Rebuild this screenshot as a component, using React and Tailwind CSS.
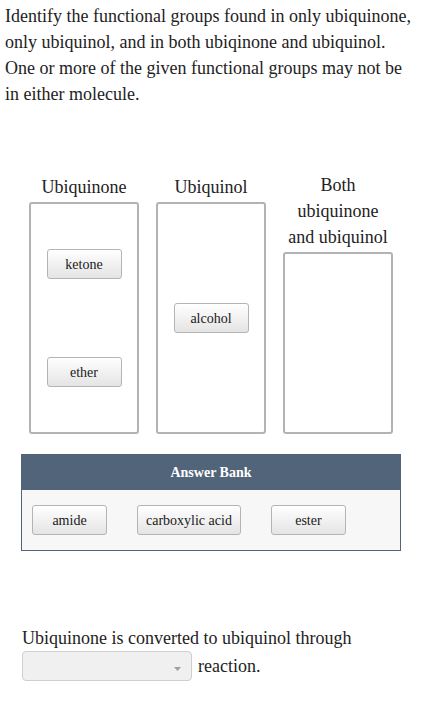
import React from "react";

const serif = { fontFamily: '"Liberation Serif", "Times New Roman", serif' };

const COLUMNS = [
  { label: ["Ubiquinone"], height: "h-[232px]", items: ["ketone", "ether"] },
  { label: ["Ubiquinol"], height: "h-[232px]", items: ["alcohol"] },
  { label: ["Both", "ubiquinone", "and ubiquinol"], height: "h-[182px]", items: [] },
];

const BANK = ["amide", "carboxylic acid", "ester"];

function Chip({ children }) {
  return (
    <div className="flex h-[30px] min-w-[75px] items-center justify-center rounded-[3px] border border-[#b4b4b4] bg-gradient-to-b from-white to-[#e4e4e4] px-[8px] text-[14px] text-[#1a1a1a]">
      {children}
    </div>
  );
}

function DropColumn({ label, height, items }) {
  return (
    <div className="flex w-[110px] flex-col items-center">
      <div className="mb-[2px] whitespace-nowrap text-center text-[18px] leading-[26px] text-[#222]">
        {label.map((l) => (
          <div key={l}>{l}</div>
        ))}
      </div>
      <div
        className={`flex w-[110px] ${height} flex-col items-center justify-center gap-[78px] rounded-[3px] border-2 border-[#b3b3b3] bg-white`}
      >
        {items.map((it) => (
          <Chip key={it}>{it}</Chip>
        ))}
      </div>
    </div>
  );
}

export default function App() {
  return (
    <div className="min-h-[721px] w-[421px] bg-white text-[#222]" style={serif}>
      <p className="whitespace-nowrap pl-[5px] pt-[3px] text-[18px] leading-[26px]">
        Identify the functional groups found in only ubiquinone,
        <br />
        only ubiquinol, and in both ubiqinone and ubiquinol.
        <br />
        One or more of the given functional groups may not be
        <br />
        in either molecule.
      </p>

      <div className="mt-[65px] flex items-end gap-[17px] pl-[29px]">
        {COLUMNS.map((c) => (
          <DropColumn key={c.label.join(" ")} {...c} />
        ))}
      </div>

      <div className="ml-[21px] mt-[20px] w-[380px] border border-[#516479]">
        <div className="flex h-[35px] items-center justify-center bg-[#516479] text-[14px] font-bold text-white">
          Answer Bank
        </div>
        <div className="flex h-[60px] items-center gap-[30px] bg-[#f7f7f7] pl-[10px]">
          {BANK.map((b) => (
            <Chip key={b}>{b}</Chip>
          ))}
        </div>
      </div>

      <div className="ml-[22px] mt-[74px] text-[18px] leading-[26px]">
        <div>Ubiquinone is converted to ubiquinol through</div>
        <div className="flex items-center gap-[6px]">
          <div className="relative h-[30px] w-[170px] rounded-[4px] border border-[#cfcfcf] bg-[#f0f0f0]">
            <svg className="absolute right-[10px] top-[15px]" width="7" height="4" viewBox="0 0 7 4">
              <path d="M0 0 L7 0 L3.5 4 Z" fill="#a0a0a0" />
            </svg>
          </div>
          <span>reaction.</span>
        </div>
      </div>
    </div>
  );
}
